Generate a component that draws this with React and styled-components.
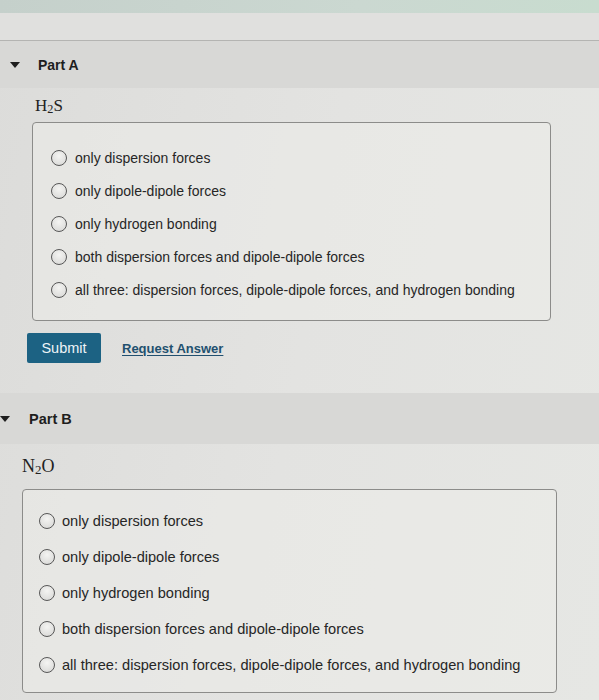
import styled, { createGlobalStyle } from 'styled-components';

const GlobalStyle = createGlobalStyle`
  html, body {
    margin: 0;
    padding: 0;
    background: #e1e1df;
    font-family: "Liberation Sans", Arial, sans-serif;
    color: #2b2b2b;
  }
`;

const Page = styled.div`
  width: 599px;
  height: 700px;
  overflow: hidden;
  background: linear-gradient(100deg, #dcdcda 0%, #e3e3e1 50%, #e6e7e4 100%);
`;

const TopStrip = styled.div`
  height: 13px;
  background: linear-gradient(90deg, #c5d0cb 0%, #cbd8d1 60%, #c8dccf 100%);
`;

const TopBar = styled.div`
  height: 27px;
  border-bottom: 1px solid #b4b4b2;
  background: #e0e0de;
`;

const PartHeader = styled.div`
  height: ${(p) => p.$height}px;
  display: flex;
  align-items: center;
  padding-left: ${(p) => p.$indent}px;
  background: #d8d8d6;
  gap: ${(p) => p.$gap}px;
`;

const Caret = styled.span`
  width: 0;
  height: 0;
  border-left: 5px solid transparent;
  border-right: 5px solid transparent;
  border-top: 6px solid #1e1e1e;
`;

const PartTitle = styled.h3`
  margin: 0;
  font-size: ${(p) => p.$size}px;
  font-weight: 700;
  color: #1e1e1e;
`;

const Body = styled.div`
  padding-left: ${(p) => p.$indent}px;
  padding-top: ${(p) => p.$top}px;
`;

const Formula = styled.div`
  font-family: "Liberation Serif", "Times New Roman", serif;
  font-size: ${(p) => p.$size}px;
  line-height: ${(p) => p.$line}px;
  height: ${(p) => p.$line}px;
  margin-left: ${(p) => p.$shift}px;
  color: #222;

  sub {
    font-size: 0.72em;
    line-height: 0;
    vertical-align: -0.15em;
  }
`;

const ChoiceBox = styled.div`
  margin-top: ${(p) => p.$top}px;
  width: ${(p) => p.$width}px;
  box-sizing: border-box;
  border: 1px solid #8c8c8a;
  border-radius: 4px;
  background: rgba(236, 236, 234, 0.55);
  padding: ${(p) => p.$pad};
`;

const Choice = styled.label`
  display: flex;
  align-items: center;
  height: ${(p) => p.$row}px;
  gap: ${(p) => p.$gap}px;
  font-size: ${(p) => p.$size}px;
  color: #262626;
`;

const Radio = styled.span`
  flex: none;
  width: 14px;
  height: 14px;
  border: 1.5px solid #575757;
  border-radius: 50%;
  background: radial-gradient(circle at 50% 35%, #f4f4f2 0%, #d6d6d4 100%);
`;

const Actions = styled.div`
  display: flex;
  align-items: center;
  gap: 21px;
  margin-top: 12px;
  margin-left: -5px;
  margin-bottom: 30px;
`;

const SubmitButton = styled.button`
  width: 74px;
  height: 30px;
  border: none;
  border-radius: 2px;
  background: #1c6283;
  color: #eef4f7;
  font-family: "Liberation Sans", Arial, sans-serif;
  font-size: 14.5px;
  padding: 0;
`;

const LinkButton = styled.a`
  font-size: 13px;
  font-weight: 700;
  color: #22506f;
  text-decoration: underline;
  text-underline-offset: 2px;
`;

const options = [
  'only dispersion forces',
  'only dipole-dipole forces',
  'only hydrogen bonding',
  'both dispersion forces and dipole-dipole forces',
  'all three: dispersion forces, dipole-dipole forces, and hydrogen bonding',
];

const Part = ({ title, formula, cfg, children }) => (
  <section>
    <PartHeader $height={cfg.header} $indent={cfg.caret} $gap={cfg.titleGap}>
      <Caret />
      <PartTitle $size={cfg.title}>{title}</PartTitle>
    </PartHeader>
    <Body $indent={cfg.box} $top={cfg.bodyTop}>
      <Formula $size={cfg.formula} $line={cfg.formulaLine} $shift={cfg.formulaShift}>
        {formula}
      </Formula>
      <ChoiceBox $top={cfg.boxTop} $width={cfg.boxWidth} $pad={cfg.boxPad}>
        {options.map((o) => (
          <Choice key={o} $row={cfg.row} $gap={cfg.radioGap} $size={cfg.text}>
            <Radio />
            {o}
          </Choice>
        ))}
      </ChoiceBox>
      {children}
    </Body>
  </section>
);

const partA = {
  header: 47, caret: 10, titleGap: 18, title: 14,
  box: 32, bodyTop: 8, formula: 17, formulaLine: 20, formulaShift: 3,
  boxTop: 6, boxWidth: 519, boxPad: '18px 0 14px 18px',
  row: 33, radioGap: 8, text: 14,
};

const partB = {
  header: 51, caret: -2, titleGap: 19, title: 14.5,
  box: 22, bodyTop: 11, formula: 18, formulaLine: 22, formulaShift: 0,
  boxTop: 12, boxWidth: 535, boxPad: '13px 0 9px 16px',
  row: 36, radioGap: 7, text: 14.6,
};

export default function App() {
  return (
    <Page>
      <GlobalStyle />
      <TopStrip />
      <TopBar />
      <Part title="Part A" formula={<>H<sub>2</sub>S</>} cfg={partA}>
        <Actions>
          <SubmitButton>Submit</SubmitButton>
          <LinkButton>Request Answer</LinkButton>
        </Actions>
      </Part>
      <Part title="Part B" formula={<>N<sub>2</sub>O</>} cfg={partB} />
    </Page>
  );
}
